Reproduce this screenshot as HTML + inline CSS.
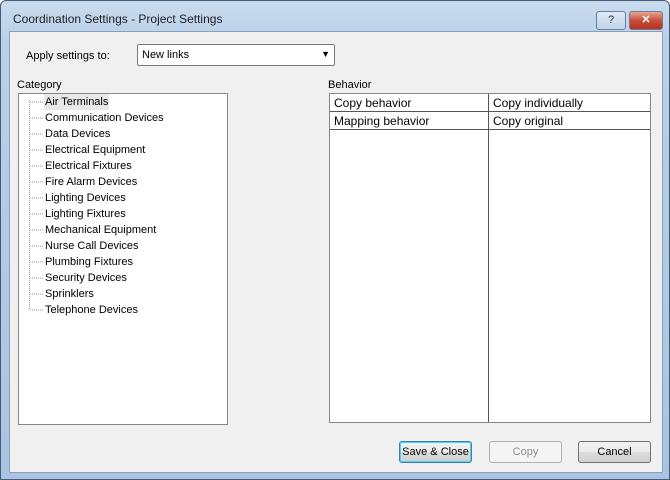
<!DOCTYPE html><html><head><style>
body{margin:0;width:670px;height:480px;overflow:hidden;font-family:"Liberation Sans",sans-serif;font-size:11px;color:#000}
.win{position:absolute;left:0;top:0;width:668px;height:478px;border:1px solid #4a5a6e;border-radius:6px 6px 0 0;background:linear-gradient(#c9dbee,#b9d0ea 40px,#a9c4e2);}
.client{position:absolute;left:8px;top:30px;width:652px;height:440px;background:#f0f0f0;border:1px solid #8aa0b8}
.title{position:absolute;left:12px;top:11px;font-size:12px;color:#1e1e1e}
.tb{position:absolute;top:10px;height:17px;border:1px solid #6d7f95;border-radius:3px}
.a{position:absolute}
.tree{left:8px;top:61px;width:208px;height:330px;background:#fff;border:1px solid #828790}
.tree div{position:absolute;left:26px;height:16px;line-height:16px;white-space:nowrap}
.tbl{left:319px;top:61px;width:320px;height:328px;background:#fff;border:1px solid #828790}
.btn{position:absolute;top:409px;width:71px;height:20px;border:1px solid #707070;border-radius:3px;background:linear-gradient(#f2f2f2,#ebebeb 50%,#dddddd 51%,#cfcfcf);text-align:center;line-height:20px;font-size:11px}
</style></head><body>
<div class="win">
<div class="title">Coordination Settings - Project Settings</div>
<div class="tb" style="left:595px;width:28px;background:linear-gradient(#dfe9f5,#c0d3ea);text-align:center;font-size:11px;line-height:17px;color:#334">?</div>
<div class="tb" style="left:628px;width:32px;background:linear-gradient(#e8a493,#c9503a 50%,#b8301c);text-align:center;font-weight:bold;color:#fff;line-height:17px;font-size:11px">✕</div>
<div class="client">
<div class="a" style="left:16px;top:18px">Apply settings to:</div>
<div class="a" style="left:127px;top:12px;width:196px;height:20px;background:#fff;border:1px solid #7a7a7a;border-radius:2px"><span style="position:absolute;left:4px;top:4px">New links</span><span style="position:absolute;right:4px;top:4px;font-size:9px">▼</span></div>
<div class="a" style="left:7px;top:47px">Category</div>
<div class="a" style="left:318px;top:47px">Behavior</div>
<div class="a tree">
<svg class="a" style="left:0;top:0" width="30" height="230"><path d="M10.5 6V216M11 8H24M11 24H24M11 40H24M11 56H24M11 72H24M11 88H24M11 104H24M11 120H24M11 136H24M11 152H24M11 168H24M11 184H24M11 200H24M11 216H24" stroke="#999" stroke-dasharray="1 1" fill="none"/></svg>
<div style="top:0;background:#e8e8e8;padding:0 1px;left:25px">Air Terminals</div>
<div style="top:16px">Communication Devices</div>
<div style="top:32px">Data Devices</div>
<div style="top:48px">Electrical Equipment</div>
<div style="top:64px">Electrical Fixtures</div>
<div style="top:80px">Fire Alarm Devices</div>
<div style="top:96px">Lighting Devices</div>
<div style="top:112px">Lighting Fixtures</div>
<div style="top:128px">Mechanical Equipment</div>
<div style="top:144px">Nurse Call Devices</div>
<div style="top:160px">Plumbing Fixtures</div>
<div style="top:176px">Security Devices</div>
<div style="top:192px">Sprinklers</div>
<div style="top:208px">Telephone Devices</div>
</div>
<div class="a tbl">
<div class="a" style="left:158px;top:0;width:1px;height:328px;background:#555"></div>
<div class="a" style="left:0;top:17px;width:320px;height:1px;background:#555"></div>
<div class="a" style="left:0;top:35px;width:320px;height:1px;background:#555"></div>
<div class="a" style="left:4px;top:2px;font-size:12px">Copy behavior</div>
<div class="a" style="left:163px;top:2px;font-size:12px">Copy individually</div>
<div class="a" style="left:4px;top:20px;font-size:12px">Mapping behavior</div>
<div class="a" style="left:163px;top:20px;font-size:12px">Copy original</div>
</div>
<div class="btn" style="left:389px;border-color:#3c7fb1;box-shadow:inset 0 0 0 1px #48d0f8">Save &amp; Close</div>
<div class="btn" style="left:479px;background:#f4f4f4;border-color:#adb2b5;color:#8d8d8d">Copy</div>
<div class="btn" style="left:568px">Cancel</div>
</div></div>
</body></html>
